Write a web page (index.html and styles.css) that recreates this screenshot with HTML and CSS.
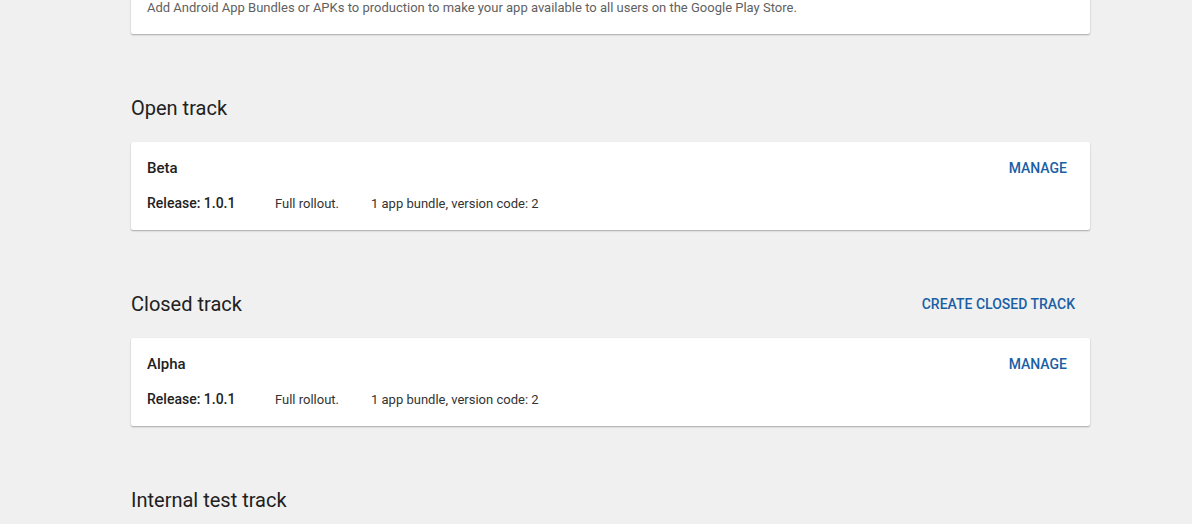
FILE: index.html
```html
<!DOCTYPE html>
<html>
<head>
<meta charset="utf-8">
<link rel="stylesheet" href="styles.css">
</head>
<body>
<main class="page">
  <section class="card card-top">
    <p class="desc">Add Android App Bundles or APKs to production to make your app available to all users on the Google Play Store.</p>
  </section>

  <section class="track">
    <div class="track-head">
      <h2 class="track-title">Open track</h2>
    </div>
    <div class="card release-card">
      <div class="card-head">
        <h3 class="release-name">Beta</h3>
        <button class="text-btn">MANAGE</button>
      </div>
      <div class="release-row">
        <span class="release-ver">Release: 1.0.1</span>
        <span class="release-meta">Full rollout.</span>
        <span class="release-meta">1 app bundle, version code: 2</span>
      </div>
    </div>
  </section>

  <section class="track">
    <div class="track-head">
      <h2 class="track-title">Closed track</h2>
      <button class="text-btn">CREATE CLOSED TRACK</button>
    </div>
    <div class="card release-card">
      <div class="card-head">
        <h3 class="release-name">Alpha</h3>
        <button class="text-btn">MANAGE</button>
      </div>
      <div class="release-row">
        <span class="release-ver">Release: 1.0.1</span>
        <span class="release-meta">Full rollout.</span>
        <span class="release-meta">1 app bundle, version code: 2</span>
      </div>
    </div>
  </section>

  <section class="track">
    <div class="track-head">
      <h2 class="track-title">Internal test track</h2>
    </div>
  </section>
</main>
</body>
</html>
```

FILE: styles.css
```css
html, body {
  margin: 0;
  padding: 0;
  background: #f0f0f0;
  font-family: Roboto, "Liberation Sans", Arial, sans-serif;
  color: #212121;
  overflow: hidden;
}

.page {
  width: 959px;
  margin: -2px 0 0 131px;
}

.card {
  background: #fff;
  border-radius: 2px;
  box-shadow: 0 1px 2px rgba(0,0,0,0.22), 0 1px 1px rgba(0,0,0,0.1);
}

.card-top {
  padding: 0 16px 16px;
  border-top-left-radius: 0;
  border-top-right-radius: 0;
}

.desc {
  margin: 0;
  font-size: 13px;
  line-height: 20px;
  color: #616161;
}

.track {
  margin-top: 56px;
}

.track-head {
  height: 36px;
  margin-bottom: 16px;
  display: flex;
  align-items: center;
  justify-content: space-between;
  padding-right: 7px;
}

.track-title {
  margin: 0;
  font-size: 20px;
  font-weight: 400;
  color: #212121;
  line-height: 28px;
}

.text-btn {
  border: 0;
  background: none;
  padding: 0 8px;
  height: 36px;
  font-family: inherit;
  font-size: 14px;
  font-weight: 500;
  letter-spacing: 0;
  color: #1a5fa6;
  cursor: pointer;
}

.release-card {
  padding: 9px 16px 16px;
  height: 63px;
}

.card-head {
  display: flex;
  align-items: center;
  justify-content: space-between;
  height: 34px;
  margin-right: -1px;
}

.release-name {
  margin: 0;
  font-size: 15px;
  font-weight: 500;
  color: #212121;
}

.release-row {
  display: grid;
  grid-template-columns: 128px 96px auto;
  align-items: center;
  height: 20px;
  margin-top: 8px;
}

.release-ver {
  font-size: 14px;
  font-weight: 500;
  color: #212121;
}

.release-meta {
  font-size: 13px;
  color: #333;
}
```
